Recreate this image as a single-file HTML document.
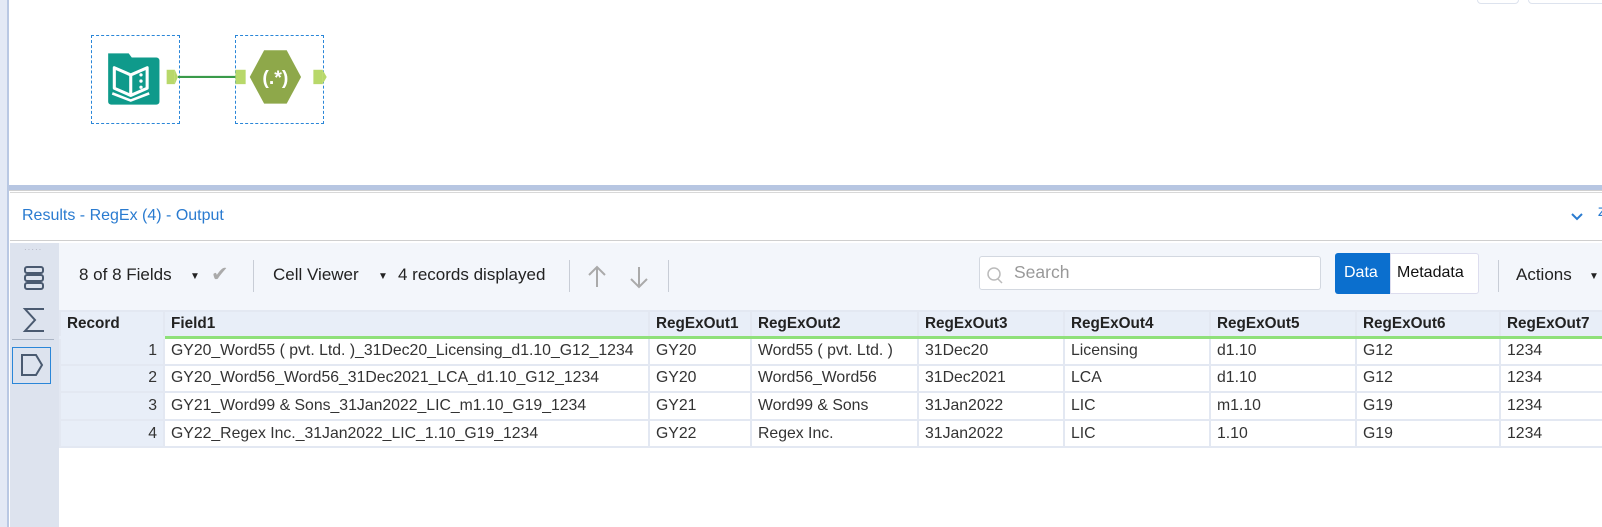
<!DOCTYPE html>
<html><head><meta charset="utf-8"><style>
*{box-sizing:border-box;margin:0;padding:0}
body{width:1602px;height:527px;overflow:hidden;background:#fff;font-family:"Liberation Sans",sans-serif;font-size:14px;color:#333;position:relative}
.abs{position:absolute}
.lstrip{left:0;top:0;width:9px;height:527px;background:#e3e9f5;border-right:2px solid #b9c8e3}
.sep{left:9px;top:185px;width:1593px;height:6px;background:#b7c6e2;border-bottom:1px solid #d0d0d0}
.hdr{left:10px;top:192px;width:1592px;height:49px;background:#fff;border-top:1px solid #d8d8d8;border-bottom:1px solid #cfcfcf;}
.hdr span{position:absolute;left:12px;top:14px;color:#2a7bd0;font-size:16px}
.side{left:10px;top:243px;width:49px;height:284px;background:#dde3ee}
.tb{left:59px;top:243px;width:1543px;height:67px;background:#f3f6fb}
.tb .t{position:absolute;top:22px;font-size:17px;color:#222}
.vl{position:absolute;top:17px;width:1px;height:32px;background:#c8cdd6}
table{position:absolute;left:59px;top:310px;border-collapse:collapse;table-layout:fixed;width:1560px}
tr{height:27.6px}
td,th{border:2px solid #e3e8f2;padding:0 6px;white-space:nowrap;overflow:hidden;font-weight:normal;text-align:left;font-size:15.8px}
th{background:#e8eef8;font-weight:bold;color:#222;border-bottom:3px solid #8fe07a;font-size:15.3px}
th.r{border-bottom:3px solid #e8eef8}
td.r{background:#e8eef8;text-align:right}
td{background:#fff}
</style></head><body>
<div class="abs lstrip"></div>
<div class="abs" style="left:1477px;top:-6px;width:42px;height:10px;border:1px solid #dde3ee;border-radius:4px"></div>
<div class="abs" style="left:1528px;top:-6px;width:80px;height:10px;border:1px solid #dde3ee;border-radius:4px"></div>
<div class="abs" style="left:91px;top:35px;width:89px;height:89px;border:1px dashed #2a86d8"></div>
<div class="abs" style="left:235px;top:35px;width:89px;height:89px;border:1px dashed #2a86d8"></div>
<svg class="abs" style="left:102px;top:45px" width="236" height="67" viewBox="0 0 230 65">
<path d="M6 8 h20 l3 4 h24 a3 3 0 0 1 3 3 v40 a3 3 0 0 1 -3 3 h-44 a3 3 0 0 1 -3 -3 z" fill="#0f9a8b"/>
<path d="M12 22 l16 7 v20 l-16 -7z M44 22 l-16 7 v20 l16 -7z" fill="none" stroke="#fff" stroke-width="3" stroke-linejoin="round"/>
<path d="M10 47 l18 7 l18 -7" fill="none" stroke="#fff" stroke-width="2.5"/>
<circle cx="38" cy="29" r="1.6" fill="#fff"/><circle cx="38" cy="35" r="1.6" fill="#fff"/><circle cx="38" cy="41" r="1.6" fill="#fff"/>
<rect x="63" y="24" width="8" height="14" fill="#b8d86a"/><path d="M71 24 l3 7 l-3 7z" fill="#b8d86a"/>
<line x1="74" y1="31" x2="132" y2="31" stroke="#3a9a4a" stroke-width="2"/>
<rect x="130" y="24" width="10" height="14" fill="#b8d86a"/>
<path d="M158 5 h22 l14 26 l-14 26 h-22 l-14 -26z" fill="#8ea84a"/>
<text x="169" y="38" text-anchor="middle" font-family="Liberation Sans,sans-serif" font-size="19" font-weight="bold" fill="#fff">(.*)</text>
<rect x="206" y="24" width="9" height="14" fill="#b8d86a"/><path d="M215 24 l4 7 l-4 7z" fill="#b8d86a"/>
</svg>
<div class="abs sep"></div>
<div class="abs hdr"><span>Results - RegEx (4) - Output</span>
<svg style="position:absolute;left:1560px;top:19px" width="14" height="10"><path d="M2 2 l5 5 l5 -5" fill="none" stroke="#2a7bd0" stroke-width="2"/></svg>
<div style="position:absolute;left:1588px;top:10px;color:#2a7bd0;font-size:16px">ʐ</div>
</div>
<div class="abs side">
<div style="position:absolute;left:14px;top:2px;color:#aab;font-size:8px;letter-spacing:1px">·····</div>
<svg style="position:absolute;left:12px;top:22px" width="26" height="110">
<rect x="3" y="2" width="18" height="6" rx="2" fill="none" stroke="#4a5a70" stroke-width="2"/>
<rect x="3" y="10" width="18" height="6" rx="2" fill="none" stroke="#4a5a70" stroke-width="2"/>
<rect x="3" y="18" width="18" height="6" rx="2" fill="none" stroke="#4a5a70" stroke-width="2"/>
<path d="M22 44 h-19 l10 11 l-10 11 h19" fill="none" stroke="#4a5a70" stroke-width="2"/>
</svg>
<div style="position:absolute;left:2px;top:96px;width:42px;height:1px;background:#aab4c4"></div>
<div style="position:absolute;left:2px;top:104px;width:39px;height:37px;border:1px solid #2a86d8"></div>
<svg style="position:absolute;left:8px;top:109px" width="28" height="26"><path d="M4 3 h14 l6 10 l-6 10 h-14z" fill="none" stroke="#4a5a70" stroke-width="2"/></svg>
</div>
<div class="abs tb">
<span class="t" style="left:20px">8 of 8 Fields</span>
<span class="t" style="left:131px;font-size:10px;top:28px">▼</span>
<span class="t" style="left:152px;color:#aaa;font-size:21px;top:19px">✔</span>
<div class="vl" style="left:194px"></div>
<span class="t" style="left:214px">Cell Viewer</span>
<span class="t" style="left:319px;font-size:10px;top:28px">▼</span>
<span class="t" style="left:339px">4 records displayed</span>
<div class="vl" style="left:510px"></div>
<svg style="position:absolute;left:527px;top:21px" width="72" height="26"><path d="M11 23 V3 M3 11 l8 -8 l8 8" fill="none" stroke="#aaa" stroke-width="2"/><path d="M53 3 V23 M45 15 l8 8 l8 -8" fill="none" stroke="#aaa" stroke-width="2"/></svg>
<div class="vl" style="left:609px"></div>
<div style="position:absolute;left:920px;top:13px;width:342px;height:34px;background:#fff;border:1px solid #d3d8e0;border-radius:3px">
<svg style="position:absolute;left:6px;top:8px" width="18" height="20"><circle cx="8" cy="9" r="6" fill="none" stroke="#bbb" stroke-width="1.5"/><path d="M12 14 l4 4" stroke="#bbb" stroke-width="1.5"/></svg>
<span style="position:absolute;left:34px;top:5px;color:#999;font-size:17.5px">Search</span></div>
<div style="position:absolute;left:1276px;top:10px;width:55px;height:41px;background:#0b6fce;border-radius:3px 0 0 3px;color:#fff;font-size:16px;padding:11px 0 0 9px">Data</div>
<div style="position:absolute;left:1331px;top:10px;width:89px;height:41px;background:#fff;border:1px solid #dde;border-radius:0 3px 3px 0;color:#111;font-size:16px;padding:10px 0 0 6px">Metadata</div>
<div class="vl" style="left:1439px"></div>
<span class="t" style="left:1457px">Actions</span>
<span class="t" style="left:1530px;font-size:10px;top:28px">▼</span>
</div>
<table>
<colgroup><col style="width:104px"><col style="width:485px"><col style="width:102px"><col style="width:167px"><col style="width:146px"><col style="width:146px"><col style="width:146px"><col style="width:144px"><col style="width:120px"></colgroup>
<tr style="height:26px"><th class="r">Record</th><th>Field1</th><th>RegExOut1</th><th>RegExOut2</th><th>RegExOut3</th><th>RegExOut4</th><th>RegExOut5</th><th>RegExOut6</th><th>RegExOut7</th></tr>
<tr><td class="r">1</td><td>GY20_Word55 ( pvt. Ltd. )_31Dec20_Licensing_d1.10_G12_1234</td><td>GY20</td><td>Word55 ( pvt. Ltd. )</td><td>31Dec20</td><td>Licensing</td><td>d1.10</td><td>G12</td><td>1234</td></tr>
<tr><td class="r">2</td><td>GY20_Word56_Word56_31Dec2021_LCA_d1.10_G12_1234</td><td>GY20</td><td>Word56_Word56</td><td>31Dec2021</td><td>LCA</td><td>d1.10</td><td>G12</td><td>1234</td></tr>
<tr><td class="r">3</td><td>GY21_Word99 &amp; Sons_31Jan2022_LIC_m1.10_G19_1234</td><td>GY21</td><td>Word99 &amp; Sons</td><td>31Jan2022</td><td>LIC</td><td>m1.10</td><td>G19</td><td>1234</td></tr>
<tr><td class="r">4</td><td>GY22_Regex Inc._31Jan2022_LIC_1.10_G19_1234</td><td>GY22</td><td>Regex Inc.</td><td>31Jan2022</td><td>LIC</td><td>1.10</td><td>G19</td><td>1234</td></tr>
</table>
</body></html>
